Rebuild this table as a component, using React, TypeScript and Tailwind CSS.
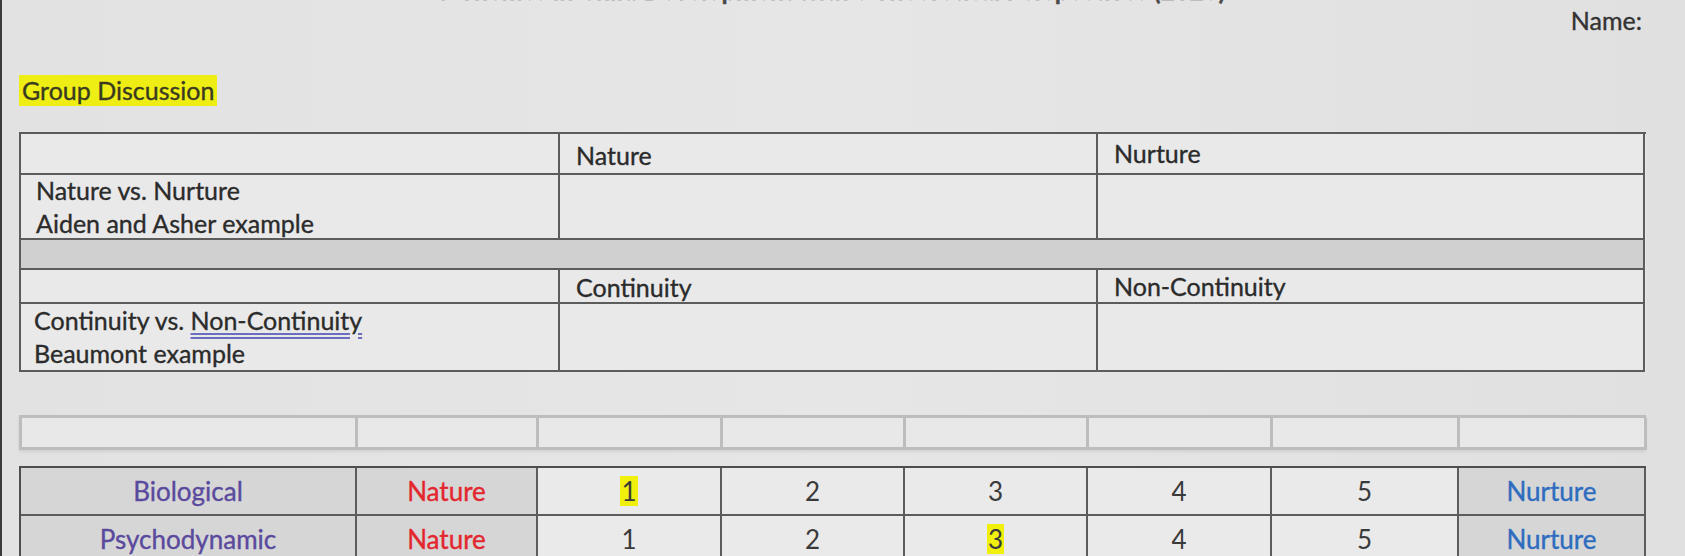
import React from "react";

const scaleRows = [
    { label: "Biological", mark: 1 },
    { label: "Psychodynamic", mark: 3 },
];

const Cell = ({ className = "", children }: { className?: string; children?: React.ReactNode }) => (
    <div className={`border-r-2 border-b-2 border-[#5c5c5c] ${className}`}>{children}</div>
);

export default function App() {
    return (
        <div className="h-[556px] w-[1685px] overflow-hidden border-l-[2px] border-[#3b3b3b] bg-[linear-gradient(90deg,#e2e2e2,#e6e6e6_50%,#e0e0e0)] font-['Lato',sans-serif] text-[#2b2b2b] [-webkit-text-stroke:0.35px_currentColor]">
            <div className="pl-[17px] pr-[39px]">
                {/* title, mostly cut off by the photo */}
                <div className="-mt-[23px] h-[26px] text-center text-[25px] font-bold leading-[26px] text-[#4a4a4a]">
                    7 Themes in Child Development with 3 Theoretical Perspectives (2023)
                </div>

                <div className="mt-[3px] flex justify-end pr-[4px] text-[25px] leading-[28px] text-[#333]">Name:</div>

                <div className="mt-[41px]">
                    <span className="inline-block bg-[#eeee14] px-[3px] text-[25px] leading-[31px] text-[#3a3a20]">
                        Group Discussion
                    </span>
                </div>

                {/* Nature / Continuity table */}
                <div className="mt-[26px] grid grid-cols-[539px_538px_547px] border-t-2 border-l-2 border-[#5c5c5c] bg-[#e9e9e9] text-[25px] leading-[33px]">
                    <Cell className="h-[41px]" />
                    <Cell className="flex h-[41px] items-center pt-[3px] pl-[16px]">Nature</Cell>
                    <Cell className="flex h-[41px] items-center pl-[16px]">Nurture</Cell>

                    <Cell className="flex h-[65px] flex-col justify-center pl-[15px]">
                        <span>Nature vs. Nurture</span>
                        <span>Aiden and Asher example</span>
                    </Cell>
                    <Cell className="h-[65px]" />
                    <Cell className="h-[65px]" />

                    <Cell className="col-span-3 h-[30px] bg-[#d0d0d0]" />

                    <Cell className="h-[34px]" />
                    <Cell className="flex h-[34px] items-center pt-[2px] pl-[16px]">Continuity</Cell>
                    <Cell className="flex h-[34px] items-center pl-[16px]">Non-Continuity</Cell>

                    <Cell className="flex h-[68px] flex-col justify-center pl-[13px]">
                        <span>
                            Continuity vs.{" "}
                            <span className="underline decoration-[#6d6dc0] decoration-double underline-offset-[3px]">
                                Non-Continuity
                            </span>
                        </span>
                        <span>Beaumont example</span>
                    </Cell>
                    <Cell className="h-[68px]" />
                    <Cell className="h-[68px]" />
                </div>

                {/* empty ghost row */}
                <div className="mt-[43px] grid h-[35px] grid-cols-[336px_181px_184px_183px_183px_184px_187px_187px] border-t-[3px] border-l-[3px] border-[#bdbdbd] bg-[#e8e8e8] shadow-[0_2px_3px_rgba(0,0,0,0.08)]">
                    {Array.from({ length: 8 }).map((_, i) => (
                        <div key={i} className="border-r-[3px] border-b-[3px] border-[#bdbdbd]" />
                    ))}
                </div>

                {/* perspective scale */}
                <div className="mt-[16px] grid grid-cols-[336px_181px_184px_183px_183px_184px_187px_187px] border-t-2 border-l-2 border-[#4e4e4e] text-[26px]">
                    {scaleRows.map((row) => (
                        <React.Fragment key={row.label}>
                            <Cell className="flex h-[48px] items-center justify-center bg-[#d6d6d6] text-[#5a4a9e]">
                                {row.label}
                            </Cell>
                            <Cell className="flex h-[48px] items-center justify-center bg-[#d6d6d6] text-[#e3262e]">
                                Nature
                            </Cell>
                            {[1, 2, 3, 4, 5].map((n) => (
                                <Cell
                                    key={n}
                                    className="flex h-[48px] items-center justify-center bg-[#eaeaea] text-[#3a3a3a] [-webkit-text-stroke:0px]"
                                >
                                    {n === row.mark ? (
                                        <span className="bg-[#f0f00c] px-[1px] leading-[30px]">{n}</span>
                                    ) : (
                                        n
                                    )}
                                </Cell>
                            ))}
                            <Cell className="flex h-[48px] items-center justify-center bg-[#d6d6d6] text-[#2e6cbf]">
                                Nurture
                            </Cell>
                        </React.Fragment>
                    ))}
                </div>
            </div>
        </div>
    );
}
